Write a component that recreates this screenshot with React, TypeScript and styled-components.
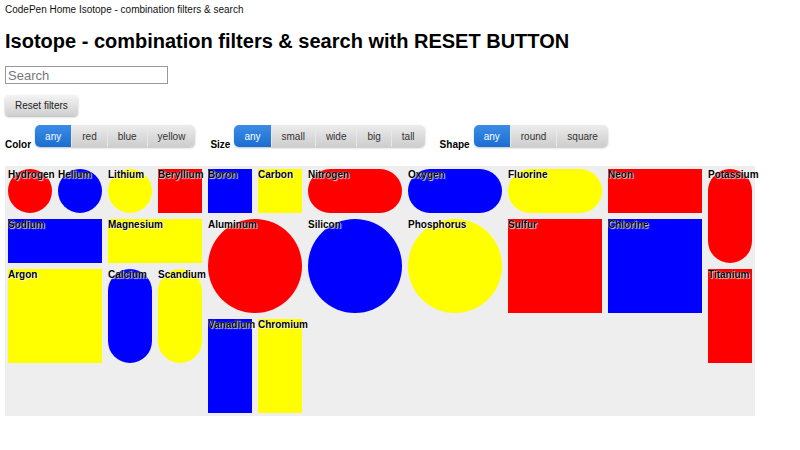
import styled, { createGlobalStyle, css } from 'styled-components';

const GlobalStyle = createGlobalStyle`
    body {
        margin: 0;
        padding: 3px 5px;
        font-family: "Liberation Sans", Arial, sans-serif;
        color: #000;
        background: #fff;
    }
`;

type Size = 'small' | 'wide' | 'big' | 'tall';
type Shape = 'round' | 'square';
type Color = 'red' | 'blue' | 'yellow';

type Element = {
    name: string,
    color: Color,
    size: Size,
    shape: Shape,
    col: number,
    row: number
}

// positions as isotope's masonry left them (50px cells)
const elements: Element[] = [
    { name: 'Hydrogen', color: 'red', size: 'small', shape: 'round', col: 0, row: 0 },
    { name: 'Helium', color: 'blue', size: 'small', shape: 'round', col: 1, row: 0 },
    { name: 'Lithium', color: 'yellow', size: 'small', shape: 'round', col: 2, row: 0 },
    { name: 'Beryllium', color: 'red', size: 'small', shape: 'square', col: 3, row: 0 },
    { name: 'Boron', color: 'blue', size: 'small', shape: 'square', col: 4, row: 0 },
    { name: 'Carbon', color: 'yellow', size: 'small', shape: 'square', col: 5, row: 0 },
    { name: 'Nitrogen', color: 'red', size: 'wide', shape: 'round', col: 6, row: 0 },
    { name: 'Oxygen', color: 'blue', size: 'wide', shape: 'round', col: 8, row: 0 },
    { name: 'Fluorine', color: 'yellow', size: 'wide', shape: 'round', col: 10, row: 0 },
    { name: 'Neon', color: 'red', size: 'wide', shape: 'square', col: 12, row: 0 },
    { name: 'Sodium', color: 'blue', size: 'wide', shape: 'square', col: 0, row: 1 },
    { name: 'Magnesium', color: 'yellow', size: 'wide', shape: 'square', col: 2, row: 1 },
    { name: 'Aluminum', color: 'red', size: 'big', shape: 'round', col: 4, row: 1 },
    { name: 'Silicon', color: 'blue', size: 'big', shape: 'round', col: 6, row: 1 },
    { name: 'Phosphorus', color: 'yellow', size: 'big', shape: 'round', col: 8, row: 1 },
    { name: 'Sulfur', color: 'red', size: 'big', shape: 'square', col: 10, row: 1 },
    { name: 'Chlorine', color: 'blue', size: 'big', shape: 'square', col: 12, row: 1 },
    { name: 'Argon', color: 'yellow', size: 'big', shape: 'square', col: 0, row: 2 },
    { name: 'Potassium', color: 'red', size: 'tall', shape: 'round', col: 14, row: 0 },
    { name: 'Calcium', color: 'blue', size: 'tall', shape: 'round', col: 2, row: 2 },
    { name: 'Scandium', color: 'yellow', size: 'tall', shape: 'round', col: 3, row: 2 },
    { name: 'Titanium', color: 'red', size: 'tall', shape: 'square', col: 14, row: 2 },
    { name: 'Vanadium', color: 'blue', size: 'tall', shape: 'square', col: 4, row: 3 },
    { name: 'Chromium', color: 'yellow', size: 'tall', shape: 'square', col: 5, row: 3 },
];

const spans: Record<Size, [number, number]> = {
    small: [1, 1],
    wide: [2, 1],
    big: [2, 2],
    tall: [1, 2],
};

const fills: Record<Color, string> = {
    red: '#ff0000',
    blue: '#0000ff',
    yellow: '#ffff00',
};

const Crumb = styled.div`
    font-size: 10px;
    line-height: 14px;
    color: #111;
`;

const Title = styled.h1`
    font-size: 20px;
    font-weight: bold;
    margin: 12px 0 13px;
    line-height: 24px;
`;

const SearchInput = styled.input`
    display: block;
    box-sizing: border-box;
    width: 163px;
    height: 18px;
    padding: 0 2px;
    border: 1px solid #999;
    font-family: "Liberation Sans", Arial, sans-serif;
    font-size: 13px;
    &::placeholder {
        color: #777;
    }
`;

const ResetButton = styled.button`
    display: block;
    margin: 11px 0 9px;
    height: 21px;
    padding: 0 10px;
    border: none;
    border-radius: 4px;
    font-family: "Liberation Sans", Arial, sans-serif;
    font-size: 10px;
    color: #222;
    background: linear-gradient(#f4f4f4, #cfcfcf);
    box-shadow: 0 1px 2px rgba(0, 0, 0, 0.3);
`;

const FilterRow = styled.div`
    display: flex;
    align-items: flex-end;
    gap: 15px;
    margin-bottom: 17px;
`;

const FilterGroup = styled.div`
    display: flex;
    align-items: flex-end;
    gap: 4px;
`;

const FilterLabel = styled.span`
    font-size: 10px;
    font-weight: bold;
    line-height: 11px;
    position: relative;
    top: 1px;
`;

const ButtonGroup = styled.div`
    display: flex;
    border-radius: 5px;
    overflow: hidden;
    box-shadow: 0 1px 2px rgba(0, 0, 0, 0.25);
    margin-bottom: 2px;
`;

const FilterButton = styled.button<{ $active?: boolean }>`
    height: 22px;
    padding: 0 10px;
    border: none;
    border-left: 1px solid #e8e8e8;
    font-family: "Liberation Sans", Arial, sans-serif;
    font-size: 10px;
    color: #333;
    background: linear-gradient(#ececec, #cdcdcd);
    &:first-child {
        border-left: none;
    }
    ${p => p.$active && css`
        color: #fff;
        background: linear-gradient(#3d8ce6, #1a6ed2);
    `}
`;

const Grid = styled.div`
    display: grid;
    grid-template-columns: repeat(15, 50px);
    grid-auto-rows: 50px;
    width: 750px;
    background: #eee;
`;

const Item = styled.div<{ $color: Color, $round: boolean }>`
    margin: 3px;
    background: ${p => fills[p.$color]};
    border-radius: ${p => p.$round ? '47px' : '0'};
`;

const ItemName = styled.h3`
    margin: 0;
    font-size: 10px;
    line-height: 12px;
    font-weight: bold;
    white-space: nowrap;
    text-shadow: 0 0 1px #fff, 1px 1px 1px rgba(255, 255, 255, 0.8);
`;

const filters = [
    { label: 'Color', options: ['any', 'red', 'blue', 'yellow'] },
    { label: 'Size', options: ['any', 'small', 'wide', 'big', 'tall'] },
    { label: 'Shape', options: ['any', 'round', 'square'] },
];

function App() {
    return (
        <div>
            <GlobalStyle />
            <Crumb>CodePen Home Isotope - combination filters &amp; search</Crumb>
            <Title>Isotope - combination filters &amp; search with RESET BUTTON</Title>
            <SearchInput type="text" placeholder="Search" />
            <ResetButton>Reset filters</ResetButton>
            <FilterRow>
                {filters.map(f => (
                    <FilterGroup key={f.label}>
                        <FilterLabel>{f.label}</FilterLabel>
                        <ButtonGroup>
                            {f.options.map((o, i) => (
                                <FilterButton key={o} $active={i === 0}>{o}</FilterButton>
                            ))}
                        </ButtonGroup>
                    </FilterGroup>
                ))}
            </FilterRow>
            <Grid>
                {elements.map(el => {
                    const [w, h] = spans[el.size];
                    return (
                        <Item
                            key={el.name}
                            $color={el.color}
                            $round={el.shape === 'round'}
                            style={{
                                gridColumn: `${el.col + 1} / span ${w}`,
                                gridRow: `${el.row + 1} / span ${h}`,
                            }}
                        >
                            <ItemName>{el.name}</ItemName>
                        </Item>
                    );
                })}
            </Grid>
        </div>
    );
}

export default App
